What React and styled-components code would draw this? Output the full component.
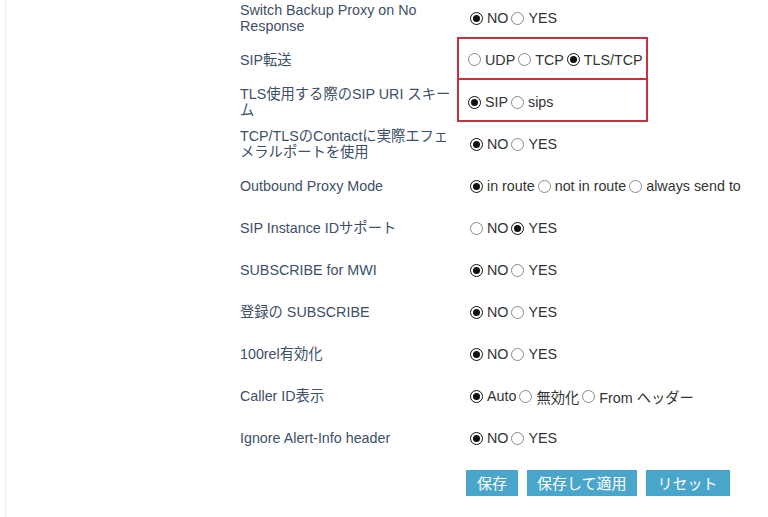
import React from "react";
import styled, { createGlobalStyle } from "styled-components";

const Global = createGlobalStyle`
  html, body { margin: 0; padding: 0; background: #fff; }
  body { font-family: "Liberation Sans", Arial, "Noto Sans CJK JP", sans-serif; overflow: hidden; }
`;

const Page = styled.div`
  width: 768px;
  height: 517px;
  overflow: hidden;
  display: flex;
`;

const SideLine = styled.div`
  width: 5px;
  flex: none;
  border-right: 1px solid #ececec;
`;

const Content = styled.div`
  flex: 1;
  padding-left: 234px;
  margin-top: -4px;
  overflow: hidden;
`;

const Table = styled.div`
  display: flex;
  flex-direction: column;
`;

const Row = styled.div`
  display: grid;
  grid-template-columns: 217px 191px;
  height: 42px;
`;

const Label = styled.div`
  display: flex;
  align-items: center;
  color: #3d5068;
  font-size: 14.3px;
  line-height: 16px;
  padding-right: 4px;
  padding-top: 1px;
`;

const Value = styled.div`
  display: flex;
  align-items: center;
  box-sizing: border-box;
  white-space: nowrap;
  color: #333;
  font-size: 14.3px;
  border: 2px solid ${(p) => (p.$mark ? "#c7323a" : "transparent")};
  border-top-width: ${(p) => (p.$noTop ? 0 : 2)}px;
  padding-top: ${(p) => (p.$noTop ? 4 : 2)}px;
  margin-top: ${(p) => (p.$mark && !p.$noTop ? -1 : 0)}px;
  padding-left: ${(p) => (p.$mark ? 9 : 11)}px;
`;

const Option = styled.span`
  display: inline-flex;
  align-items: center;
  margin-right: 3px;
`;

const Circle = styled.span`
  width: 11px;
  height: 11px;
  border-radius: 50%;
  border: 1px solid ${(p) => (p.$on ? "#111" : "#8a8a8a")};
  display: inline-flex;
  align-items: center;
  justify-content: center;
  margin-right: 4px;
  background: #fff;
  &::after {
    content: "";
    width: 7px;
    height: 7px;
    border-radius: 50%;
    background: ${(p) => (p.$on ? "#111" : "transparent")};
  }
`;

const Buttons = styled.div`
  display: flex;
  gap: 9px;
  padding-left: 226px;
  margin-top: 12px;
`;

const Button = styled.button`
  height: 26px;
  padding: 0 ${(p) => p.$pad}px;
  border: none;
  background: #4aa5cb;
  color: #fff;
  font-family: "Noto Sans CJK JP", sans-serif;
  font-size: 15px;
  line-height: 26px;
  cursor: pointer;
`;

const rows = [
  { label: "Switch Backup Proxy on No Response", opts: ["NO", "YES"], sel: 0 },
  { label: "SIP転送", opts: ["UDP", "TCP", "TLS/TCP"], sel: 2, mark: "top" },
  { label: "TLS使用する際のSIP URI スキーム", opts: ["SIP", "sips"], sel: 0, mark: "bottom" },
  { label: "TCP/TLSのContactに実際エフェメラルポートを使用", opts: ["NO", "YES"], sel: 0 },
  { label: "Outbound Proxy Mode", opts: ["in route", "not in route", "always send to"], sel: 0 },
  { label: "SIP Instance IDサポート", opts: ["NO", "YES"], sel: 1 },
  { label: "SUBSCRIBE for MWI", opts: ["NO", "YES"], sel: 0 },
  { label: "登録の SUBSCRIBE", opts: ["NO", "YES"], sel: 0 },
  { label: "100rel有効化", opts: ["NO", "YES"], sel: 0 },
  { label: "Caller ID表示", opts: ["Auto", "無効化", "From ヘッダー"], sel: 0 },
  { label: "Ignore Alert-Info header", opts: ["NO", "YES"], sel: 0 },
];

export default function App() {
  return (
    <Page>
      <Global />
      <SideLine />
      <Content>
        <Table>
          {rows.map((r, i) => (
            <Row key={i}>
              <Label>{r.label}</Label>
              <Value $mark={!!r.mark} $noTop={r.mark === "bottom"}>
                {r.opts.map((o, j) => (
                  <Option key={j}>
                    <Circle $on={j === r.sel} />
                    {o}
                  </Option>
                ))}
              </Value>
            </Row>
          ))}
        </Table>
        <Buttons>
          <Button $pad={11}>保存</Button>
          <Button $pad={10}>保存して適用</Button>
          <Button $pad={12}>リセット</Button>
        </Buttons>
      </Content>
    </Page>
  );
}
